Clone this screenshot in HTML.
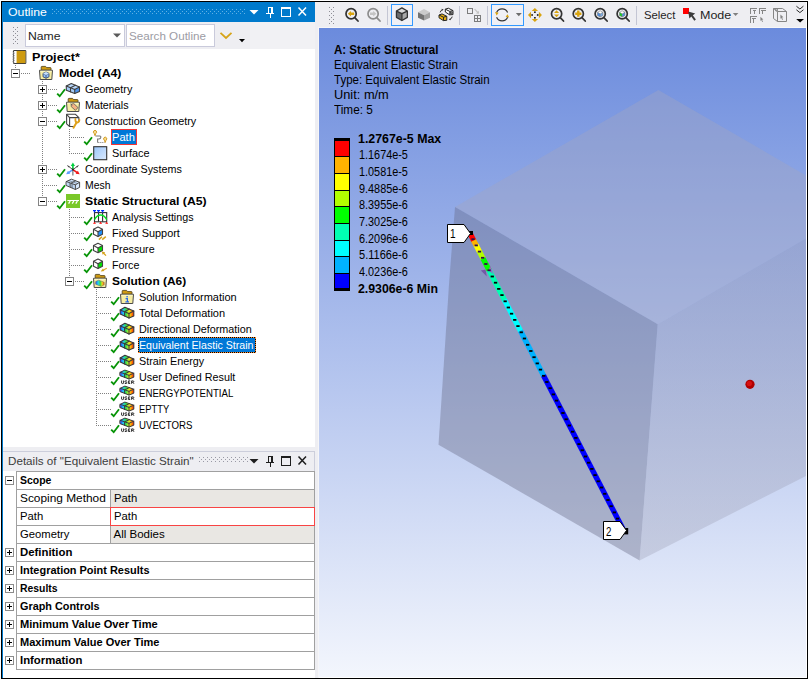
<!DOCTYPE html><html><head><meta charset="utf-8"><title>Mechanical</title><style>
html,body{margin:0;padding:0;width:809px;height:680px;overflow:hidden;background:#fff;}
body{position:relative;font-family:"Liberation Sans",sans-serif;}
.a{position:absolute;}
.t{position:absolute;white-space:pre;line-height:1;transform-origin:0 0;}
svg{overflow:visible;}
</style></head><body>
<div class="a" style="left:1px;top:1px;width:805px;height:676px;border:1px solid #000;"></div>
<div class="a" style="left:3px;top:22px;width:312px;height:656px;background:#fff;"></div>
<div class="a" style="left:315px;top:2px;width:4px;height:676px;background:#EEEEF2;"></div>
<div class="a" style="left:2px;top:2px;width:313px;height:20px;background:#007ACC;"></div>
<div class="a" style="left:2px;top:2px;width:1px;height:676px;background:#007ACC;"></div>
<svg class="a" style="left:52px;top:9px;" width="193" height="5" viewBox="0 0 193 5"><g fill="#5FB0E4" shape-rendering="crispEdges"><rect x="0" y="0" width="1" height="1"/><rect x="0" y="4" width="1" height="1"/><rect x="2" y="2" width="1" height="1"/><rect x="4" y="0" width="1" height="1"/><rect x="4" y="4" width="1" height="1"/><rect x="6" y="2" width="1" height="1"/><rect x="8" y="0" width="1" height="1"/><rect x="8" y="4" width="1" height="1"/><rect x="10" y="2" width="1" height="1"/><rect x="12" y="0" width="1" height="1"/><rect x="12" y="4" width="1" height="1"/><rect x="14" y="2" width="1" height="1"/><rect x="16" y="0" width="1" height="1"/><rect x="16" y="4" width="1" height="1"/><rect x="18" y="2" width="1" height="1"/><rect x="20" y="0" width="1" height="1"/><rect x="20" y="4" width="1" height="1"/><rect x="22" y="2" width="1" height="1"/><rect x="24" y="0" width="1" height="1"/><rect x="24" y="4" width="1" height="1"/><rect x="26" y="2" width="1" height="1"/><rect x="28" y="0" width="1" height="1"/><rect x="28" y="4" width="1" height="1"/><rect x="30" y="2" width="1" height="1"/><rect x="32" y="0" width="1" height="1"/><rect x="32" y="4" width="1" height="1"/><rect x="34" y="2" width="1" height="1"/><rect x="36" y="0" width="1" height="1"/><rect x="36" y="4" width="1" height="1"/><rect x="38" y="2" width="1" height="1"/><rect x="40" y="0" width="1" height="1"/><rect x="40" y="4" width="1" height="1"/><rect x="42" y="2" width="1" height="1"/><rect x="44" y="0" width="1" height="1"/><rect x="44" y="4" width="1" height="1"/><rect x="46" y="2" width="1" height="1"/><rect x="48" y="0" width="1" height="1"/><rect x="48" y="4" width="1" height="1"/><rect x="50" y="2" width="1" height="1"/><rect x="52" y="0" width="1" height="1"/><rect x="52" y="4" width="1" height="1"/><rect x="54" y="2" width="1" height="1"/><rect x="56" y="0" width="1" height="1"/><rect x="56" y="4" width="1" height="1"/><rect x="58" y="2" width="1" height="1"/><rect x="60" y="0" width="1" height="1"/><rect x="60" y="4" width="1" height="1"/><rect x="62" y="2" width="1" height="1"/><rect x="64" y="0" width="1" height="1"/><rect x="64" y="4" width="1" height="1"/><rect x="66" y="2" width="1" height="1"/><rect x="68" y="0" width="1" height="1"/><rect x="68" y="4" width="1" height="1"/><rect x="70" y="2" width="1" height="1"/><rect x="72" y="0" width="1" height="1"/><rect x="72" y="4" width="1" height="1"/><rect x="74" y="2" width="1" height="1"/><rect x="76" y="0" width="1" height="1"/><rect x="76" y="4" width="1" height="1"/><rect x="78" y="2" width="1" height="1"/><rect x="80" y="0" width="1" height="1"/><rect x="80" y="4" width="1" height="1"/><rect x="82" y="2" width="1" height="1"/><rect x="84" y="0" width="1" height="1"/><rect x="84" y="4" width="1" height="1"/><rect x="86" y="2" width="1" height="1"/><rect x="88" y="0" width="1" height="1"/><rect x="88" y="4" width="1" height="1"/><rect x="90" y="2" width="1" height="1"/><rect x="92" y="0" width="1" height="1"/><rect x="92" y="4" width="1" height="1"/><rect x="94" y="2" width="1" height="1"/><rect x="96" y="0" width="1" height="1"/><rect x="96" y="4" width="1" height="1"/><rect x="98" y="2" width="1" height="1"/><rect x="100" y="0" width="1" height="1"/><rect x="100" y="4" width="1" height="1"/><rect x="102" y="2" width="1" height="1"/><rect x="104" y="0" width="1" height="1"/><rect x="104" y="4" width="1" height="1"/><rect x="106" y="2" width="1" height="1"/><rect x="108" y="0" width="1" height="1"/><rect x="108" y="4" width="1" height="1"/><rect x="110" y="2" width="1" height="1"/><rect x="112" y="0" width="1" height="1"/><rect x="112" y="4" width="1" height="1"/><rect x="114" y="2" width="1" height="1"/><rect x="116" y="0" width="1" height="1"/><rect x="116" y="4" width="1" height="1"/><rect x="118" y="2" width="1" height="1"/><rect x="120" y="0" width="1" height="1"/><rect x="120" y="4" width="1" height="1"/><rect x="122" y="2" width="1" height="1"/><rect x="124" y="0" width="1" height="1"/><rect x="124" y="4" width="1" height="1"/><rect x="126" y="2" width="1" height="1"/><rect x="128" y="0" width="1" height="1"/><rect x="128" y="4" width="1" height="1"/><rect x="130" y="2" width="1" height="1"/><rect x="132" y="0" width="1" height="1"/><rect x="132" y="4" width="1" height="1"/><rect x="134" y="2" width="1" height="1"/><rect x="136" y="0" width="1" height="1"/><rect x="136" y="4" width="1" height="1"/><rect x="138" y="2" width="1" height="1"/><rect x="140" y="0" width="1" height="1"/><rect x="140" y="4" width="1" height="1"/><rect x="142" y="2" width="1" height="1"/><rect x="144" y="0" width="1" height="1"/><rect x="144" y="4" width="1" height="1"/><rect x="146" y="2" width="1" height="1"/><rect x="148" y="0" width="1" height="1"/><rect x="148" y="4" width="1" height="1"/><rect x="150" y="2" width="1" height="1"/><rect x="152" y="0" width="1" height="1"/><rect x="152" y="4" width="1" height="1"/><rect x="154" y="2" width="1" height="1"/><rect x="156" y="0" width="1" height="1"/><rect x="156" y="4" width="1" height="1"/><rect x="158" y="2" width="1" height="1"/><rect x="160" y="0" width="1" height="1"/><rect x="160" y="4" width="1" height="1"/><rect x="162" y="2" width="1" height="1"/><rect x="164" y="0" width="1" height="1"/><rect x="164" y="4" width="1" height="1"/><rect x="166" y="2" width="1" height="1"/><rect x="168" y="0" width="1" height="1"/><rect x="168" y="4" width="1" height="1"/><rect x="170" y="2" width="1" height="1"/><rect x="172" y="0" width="1" height="1"/><rect x="172" y="4" width="1" height="1"/><rect x="174" y="2" width="1" height="1"/><rect x="176" y="0" width="1" height="1"/><rect x="176" y="4" width="1" height="1"/><rect x="178" y="2" width="1" height="1"/><rect x="180" y="0" width="1" height="1"/><rect x="180" y="4" width="1" height="1"/><rect x="182" y="2" width="1" height="1"/><rect x="184" y="0" width="1" height="1"/><rect x="184" y="4" width="1" height="1"/><rect x="186" y="2" width="1" height="1"/><rect x="188" y="0" width="1" height="1"/><rect x="188" y="4" width="1" height="1"/><rect x="190" y="2" width="1" height="1"/><rect x="192" y="0" width="1" height="1"/><rect x="192" y="4" width="1" height="1"/></g></svg>
<svg class="a" style="left:0px;top:0px;" width="320" height="24" viewBox="0 0 320 24"><path d="M249.5,10 L258.5,10 L254,14.5 Z" fill="#fff"/><g fill="#fff" shape-rendering="crispEdges"><rect x="268" y="7" width="5" height="1"/><rect x="268" y="7" width="1" height="6"/><rect x="271" y="7" width="2" height="6"/><rect x="266" y="13" width="8" height="1"/><rect x="270" y="14" width="1" height="4"/></g><rect x="281.5" y="8" width="9" height="8" fill="none" stroke="#fff" stroke-width="1" shape-rendering="crispEdges"/><rect x="281" y="7" width="10" height="2" fill="#fff" shape-rendering="crispEdges"/><path d="M298.5,7.5 L306,15.5 M306,7.5 L298.5,15.5" stroke="#fff" stroke-width="1.5" fill="none"/></svg>
<div class="a" style="left:3px;top:22px;width:312px;height:27px;background:#EEEEF2;"></div>
<div class="a" style="left:250px;top:22px;width:65px;height:27px;background:#F1F1F4;"></div>
<svg class="a" style="left:13px;top:27px;" width="5" height="18" viewBox="0 0 5 18"><g fill="#8E8E96" shape-rendering="crispEdges"><rect x="0" y="0" width="1" height="1"/><rect x="4" y="0" width="1" height="1"/><rect x="2" y="2" width="1" height="1"/><rect x="0" y="4" width="1" height="1"/><rect x="4" y="4" width="1" height="1"/><rect x="2" y="6" width="1" height="1"/><rect x="0" y="8" width="1" height="1"/><rect x="4" y="8" width="1" height="1"/><rect x="2" y="10" width="1" height="1"/><rect x="0" y="12" width="1" height="1"/><rect x="4" y="12" width="1" height="1"/><rect x="2" y="14" width="1" height="1"/><rect x="0" y="16" width="1" height="1"/><rect x="4" y="16" width="1" height="1"/></g></svg>
<div class="a" style="left:25px;top:24px;width:100px;height:23px;background:#fff;box-sizing:border-box;border:1px solid #C9CADB;"></div>
<svg class="a" style="left:113px;top:33px;" width="8" height="5" viewBox="0 0 8 5"><path d="M0,0.5 L8,0.5 L4,4.5 Z" fill="#5A5A5A"/></svg>
<div class="a" style="left:126px;top:24px;width:89px;height:23px;background:#fff;box-sizing:border-box;border:1px solid #C9CADB;"></div>
<svg class="a" style="left:220px;top:32px;" width="12" height="7" viewBox="0 0 12 7"><path d="M0.5,0.8 L6,6 L11.5,0.8" fill="none" stroke="#D6A419" stroke-width="1.8"/></svg>
<svg class="a" style="left:239px;top:38.5px;" width="6" height="3.5" viewBox="0 0 6 3.5"><path d="M0,0 L6,0 L3,3.2 Z" fill="#000"/></svg>
<svg class="a" style="left:0px;top:0px;" width="320" height="450" viewBox="0 0 320 450"><g stroke="#808080" stroke-width="1" stroke-dasharray="1,1" shape-rendering="crispEdges"><line x1="15.5" y1="65" x2="15.5" y2="69"/><line x1="42.5" y1="81" x2="42.5" y2="197"/><line x1="69.5" y1="129" x2="69.5" y2="154"/><line x1="69.5" y1="209" x2="69.5" y2="277"/><line x1="96.5" y1="289" x2="96.5" y2="426"/><line x1="21" y1="73.5" x2="30" y2="73.5"/><line x1="48" y1="89.5" x2="57" y2="89.5"/><line x1="48" y1="105.5" x2="57" y2="105.5"/><line x1="48" y1="121.5" x2="57" y2="121.5"/><line x1="71" y1="137.5" x2="84" y2="137.5"/><line x1="71" y1="153.5" x2="84" y2="153.5"/><line x1="48" y1="169.5" x2="57" y2="169.5"/><line x1="44" y1="185.5" x2="57" y2="185.5"/><line x1="48" y1="201.5" x2="57" y2="201.5"/><line x1="71" y1="217.5" x2="84" y2="217.5"/><line x1="71" y1="233.5" x2="84" y2="233.5"/><line x1="71" y1="249.5" x2="84" y2="249.5"/><line x1="71" y1="265.5" x2="84" y2="265.5"/><line x1="75" y1="281.5" x2="84" y2="281.5"/><line x1="98" y1="297.5" x2="111" y2="297.5"/><line x1="98" y1="313.5" x2="111" y2="313.5"/><line x1="98" y1="329.5" x2="111" y2="329.5"/><line x1="98" y1="345.5" x2="111" y2="345.5"/><line x1="98" y1="361.5" x2="111" y2="361.5"/><line x1="98" y1="377.5" x2="111" y2="377.5"/><line x1="98" y1="393.5" x2="111" y2="393.5"/><line x1="98" y1="409.5" x2="111" y2="409.5"/><line x1="98" y1="425.5" x2="111" y2="425.5"/></g></svg>
<svg class="a" style="left:12px;top:49px;" width="16" height="16" viewBox="0 0 16 16"><rect x="1.5" y="1.5" width="12.3" height="13" rx="0.8" fill="#fff" stroke="#3A3A3A" stroke-width="1.1"/><rect x="4.6" y="1.9" width="8.8" height="12.2" fill="#CE9B10"/><path d="M0.6,3 l2,1.2 l-2,1.2 l2,1.2 l-2,1.2 l2,1.2 l-2,1.2 l2,1.2 l-2,1.2 l2,1.2" fill="none" stroke="#9A9A9A" stroke-width="0.7"/></svg>
<svg class="a" style="left:11px;top:69px;shape-rendering:crispEdges;" width="9" height="9" viewBox="0 0 9 9"><rect x="0.5" y="0.5" width="8" height="8" fill="#fff" stroke="#848484"/><rect x="2" y="4" width="5" height="1" fill="#000"/></svg>
<svg class="a" style="left:38px;top:65px;" width="16" height="16" viewBox="0 0 16 16"><path d="M3.2,5.2 V2 Q3.2,1.4 3.8,1.4 H7.6 L8.6,2.6 H12.4 Q13,2.6 13,3.2 V5.2 Z" fill="#CE9A12" stroke="#5A4A20" stroke-width="0.9"/><path d="M1.5,5.3 H14.5 L13.8,14.5 H2.2 Z" fill="#F6EDA2" stroke="#4A4A4A" stroke-width="1" stroke-linejoin="round"/><path d="M2.4,6.2 H13.6" stroke="#FFFBD8" stroke-width="0.8"/><path d="M8,7 L11,8.4 V11.8 L8,13.3 L5,11.8 V8.4 Z" fill="#8FC0F8" stroke="#3A4A6A" stroke-width="0.9" stroke-linejoin="round"/><path d="M5,8.4 L8,9.9 L11,8.4 M8,9.9 V13.3" fill="none" stroke="#3A4A6A" stroke-width="0.8"/><path d="M8,7 L11,8.4 L8,9.9 L5,8.4 Z" fill="#C8E0FC"/></svg>
<svg class="a" style="left:38px;top:85px;shape-rendering:crispEdges;" width="9" height="9" viewBox="0 0 9 9"><rect x="0.5" y="0.5" width="8" height="8" fill="#fff" stroke="#848484"/><rect x="2" y="4" width="5" height="1" fill="#000"/><rect x="4" y="2" width="1" height="5" fill="#000"/></svg>
<svg class="a" style="left:56px;top:81px;" width="10" height="16" viewBox="0 0 10 16"><path d="M1.2,12.6 L3.7,15.2 L9,8.2" fill="none" stroke="#079407" stroke-width="1.85"/></svg>
<svg class="a" style="left:65px;top:81px;" width="16" height="16" viewBox="0 0 16 16"><polygon points="1.30,4.90 6.30,2.50 14.50,6.10 9.70,8.40" fill="#B9D7FA"/><polygon points="1.30,4.90 9.70,8.40 9.70,12.50 1.30,9.20" fill="#A3CBF8"/><polygon points="9.70,8.40 14.50,6.10 14.50,10.40 9.70,12.50" fill="#4C93EE"/><g fill="none" stroke="#3E3E3E" stroke-width="1.1" stroke-linejoin="round" stroke-linecap="round"><polygon points="1.30,4.90 6.30,2.50 14.50,6.10 14.50,10.40 9.70,12.50 1.30,9.20"/><polyline points="1.30,4.90 9.70,8.40 14.50,6.10"/><polyline points="9.70,8.40 9.70,12.50"/><polyline points="10.40,4.30 5.50,6.65 5.50,10.85"/></g></svg>
<svg class="a" style="left:38px;top:101px;shape-rendering:crispEdges;" width="9" height="9" viewBox="0 0 9 9"><rect x="0.5" y="0.5" width="8" height="8" fill="#fff" stroke="#848484"/><rect x="2" y="4" width="5" height="1" fill="#000"/><rect x="4" y="2" width="1" height="5" fill="#000"/></svg>
<svg class="a" style="left:56px;top:97px;" width="10" height="16" viewBox="0 0 10 16"><path d="M1.2,12.6 L3.7,15.2 L9,8.2" fill="none" stroke="#079407" stroke-width="1.85"/></svg>
<svg class="a" style="left:65px;top:97px;" width="16" height="16" viewBox="0 0 16 16"><path d="M3.2,5.2 V2 Q3.2,1.4 3.8,1.4 H7.6 L8.6,2.6 H12.4 Q13,2.6 13,3.2 V5.2 Z" fill="#CE9A12" stroke="#5A4A20" stroke-width="0.9"/><path d="M1.5,5.3 H14.5 L13.8,14.5 H2.2 Z" fill="#F6EDA2" stroke="#4A4A4A" stroke-width="1" stroke-linejoin="round"/><path d="M2.4,6.2 H13.6" stroke="#FFFBD8" stroke-width="0.8"/><path d="M6.2,7.2 L8.8,6.6 L13,10.6 L10.4,13.4 L6.2,9.6 Z" fill="#F4B183" stroke="#5A5A5A" stroke-width="0.8" stroke-linejoin="round"/><path d="M5.6,6.6 L7.2,8.4" stroke="#5A5A5A" stroke-width="0.8"/></svg>
<svg class="a" style="left:38px;top:117px;shape-rendering:crispEdges;" width="9" height="9" viewBox="0 0 9 9"><rect x="0.5" y="0.5" width="8" height="8" fill="#fff" stroke="#848484"/><rect x="2" y="4" width="5" height="1" fill="#000"/></svg>
<svg class="a" style="left:56px;top:113px;" width="10" height="16" viewBox="0 0 10 16"><path d="M1.2,12.6 L3.7,15.2 L9,8.2" fill="none" stroke="#079407" stroke-width="1.85"/></svg>
<svg class="a" style="left:65px;top:113px;" width="16" height="16" viewBox="0 0 16 16"><g fill="#fff" stroke="#444" stroke-width="1.1" stroke-linejoin="round"><polygon points="1.6,1.3 10.5,1.3 13.9,4.6 13.9,13.5 4.6,13.5 1.6,10.9"/><polyline points="1.6,1.3 4.6,4.6 13.9,4.6" fill="none"/><polyline points="4.6,4.6 4.6,13.5" fill="none"/></g><rect x="9" y="9" width="7" height="6" fill="#fff"/><path d="M8.5,14.7 L11.6,9.4" stroke="#E0A21C" stroke-width="2" fill="none" stroke-linecap="round"/><path d="M10.4,6 Q10.2,9.4 12,9.6 Q13.8,9.6 14.4,7" stroke="#E0A21C" stroke-width="1.8" fill="none" stroke-linecap="round"/></svg>
<svg class="a" style="left:83px;top:129px;" width="10" height="16" viewBox="0 0 10 16"><path d="M1.2,12.6 L3.7,15.2 L9,8.2" fill="none" stroke="#079407" stroke-width="1.85"/></svg>
<svg class="a" style="left:92px;top:129px;" width="16" height="16" viewBox="0 0 16 16"><path d="M3.4,7 H7.8 Q9,7 8.8,8.4 Q8.6,10 7,10 H5.6 V13.5" fill="none" stroke="#7A7A7A" stroke-width="1.1"/><path d="M5.6,13.5 H12.4" fill="none" stroke="#8A8A8A" stroke-width="1.1" stroke-dasharray="1.2,0.8"/><path d="M3,6.7 L2.1,4.3 A1.6,1.6 0 1 1 3.9,4.3 Z" fill="#F8DC90" stroke="#CE961A" stroke-width="0.9"/><path d="M13.2,13.5 L12.3,11.1 A1.6,1.6 0 1 1 14.1,11.1 Z" fill="#F8DC90" stroke="#CE961A" stroke-width="0.9"/></svg>
<div class="a" style="left:111px;top:129px;width:26px;height:16px;background:#0078D7;box-sizing:border-box;border:1px solid #F53434;"></div>
<svg class="a" style="left:83px;top:145px;" width="10" height="16" viewBox="0 0 10 16"><path d="M1.2,12.6 L3.7,15.2 L9,8.2" fill="none" stroke="#079407" stroke-width="1.85"/></svg>
<svg class="a" style="left:92px;top:145px;" width="16" height="16" viewBox="0 0 16 16"><defs><linearGradient id="sfg" x1="0" y1="0" x2="1" y2="1"><stop offset="0" stop-color="#9AC6FA"/><stop offset="1" stop-color="#DCEAFD"/></linearGradient></defs><rect x="1.7" y="1.7" width="13" height="13" fill="url(#sfg)" stroke="#333" stroke-width="1.1"/></svg>
<svg class="a" style="left:38px;top:165px;shape-rendering:crispEdges;" width="9" height="9" viewBox="0 0 9 9"><rect x="0.5" y="0.5" width="8" height="8" fill="#fff" stroke="#848484"/><rect x="2" y="4" width="5" height="1" fill="#000"/><rect x="4" y="2" width="1" height="5" fill="#000"/></svg>
<svg class="a" style="left:56px;top:161px;" width="10" height="16" viewBox="0 0 10 16"><path d="M1.2,12.6 L3.7,15.2 L9,8.2" fill="none" stroke="#079407" stroke-width="1.85"/></svg>
<svg class="a" style="left:65px;top:161px;" width="16" height="16" viewBox="0 0 16 16"><g stroke="#444" stroke-width="0.9" fill="none"><path d="M2.4,4.6 L7.9,8.6 M13.5,4.6 L7.9,8.6 M7.9,14.5 V8.6"/></g><path d="M2.4,4.6 l2.4,0.6 l-1.2,1.4 Z M13.5,4.6 l-2.4,0.6 l1.2,1.4 Z" fill="#444"/><path d="M7.9,8.6 V4" stroke="#00C838" stroke-width="1.6"/><path d="M7.9,1.4 L10,5 H5.8 Z" fill="#00D040"/><path d="M7.9,8.6 L3.6,11.6" stroke="#5A9CFF" stroke-width="1.6"/><path d="M1.1,13.3 L3,9.8 L5.2,12.8 Z" fill="#5A9CFF"/><path d="M7.9,8.6 L12.2,11.6" stroke="#F01818" stroke-width="1.6"/><path d="M14.7,13.3 L12.8,9.8 L10.6,12.8 Z" fill="#F01818"/><rect x="7" y="7.7" width="1.8" height="1.8" fill="#222"/></svg>
<svg class="a" style="left:56px;top:177px;" width="10" height="16" viewBox="0 0 10 16"><path d="M1.2,12.6 L3.7,15.2 L9,8.2" fill="none" stroke="#079407" stroke-width="1.85"/></svg>
<svg class="a" style="left:65px;top:177px;" width="16" height="16" viewBox="0 0 16 16"><polygon points="1.40,4.50 6.40,2.20 14.60,5.30 10.40,7.90" fill="#CFE2FA"/><polygon points="1.40,4.50 10.40,7.90 10.40,12.50 1.40,8.60" fill="#C2DAF8"/><polygon points="10.40,7.90 14.60,5.30 14.60,10.40 10.40,12.50" fill="#D8E8FC"/><path d="M3.6,3.5 L12.5,6.6 M4.4,5.6 V9.8 M7.6,6.8 V11.2" stroke="#6A7A8A" stroke-width="0.7" fill="none"/><g fill="none" stroke="#4A4A4A" stroke-width="1" stroke-linejoin="round" stroke-linecap="round"><polygon points="1.40,4.50 6.40,2.20 14.60,5.30 14.60,10.40 10.40,12.50 1.40,8.60"/><polyline points="1.40,4.50 10.40,7.90 14.60,5.30"/><polyline points="10.40,7.90 10.40,12.50"/><polyline points="10.50,3.75 5.90,6.20 5.90,10.55"/></g></svg>
<svg class="a" style="left:38px;top:197px;shape-rendering:crispEdges;" width="9" height="9" viewBox="0 0 9 9"><rect x="0.5" y="0.5" width="8" height="8" fill="#fff" stroke="#848484"/><rect x="2" y="4" width="5" height="1" fill="#000"/></svg>
<svg class="a" style="left:56px;top:193px;" width="10" height="16" viewBox="0 0 10 16"><path d="M1.2,12.6 L3.7,15.2 L9,8.2" fill="none" stroke="#079407" stroke-width="1.85"/></svg>
<svg class="a" style="left:65px;top:193px;" width="16" height="16" viewBox="0 0 16 16"><rect x="1" y="1" width="14" height="14" fill="#7AC829"/><rect x="2.4" y="7" width="11.6" height="1" fill="#fff"/><path d="M5.2,8 L3.6,10.6 M8.8,8 L7.2,10.6 M12.4,8 L10.8,10.6" stroke="#fff" stroke-width="1.3" fill="none"/></svg>
<svg class="a" style="left:83px;top:209px;" width="10" height="16" viewBox="0 0 10 16"><path d="M1.2,12.6 L3.7,15.2 L9,8.2" fill="none" stroke="#079407" stroke-width="1.85"/></svg>
<svg class="a" style="left:92px;top:209px;" width="16" height="16" viewBox="0 0 16 16"><g fill="none" stroke="#333" stroke-width="1.1"><rect x="2.5" y="3.6" width="12.2" height="9.2" fill="#fff"/><path d="M6.5,3.6 V12.8 M10.6,3.6 V12.8"/></g><path d="M2.5,10.6 Q5,6 8.6,6 Q12.2,6 14.7,10.6" fill="none" stroke="#00E020" stroke-width="1.3"/><g stroke="#0030FF" stroke-width="1.1" fill="none"><path d="M1,1.6 H4 M5,1.6 H8 M9.1,1.6 H12.1 M2.5,1.6 V3.6 M6.5,1.6 V3.6 M10.6,1.6 V3.6"/></g><g fill="#FF0000"><path d="M2.5,12.8 L4,14.8 H1 Z M8.6,12.8 L10.1,14.8 H7.1 Z M14.7,12.8 L16.2,14.8 H13.2 Z"/></g></svg>
<svg class="a" style="left:83px;top:225px;" width="10" height="16" viewBox="0 0 10 16"><path d="M1.2,12.6 L3.7,15.2 L9,8.2" fill="none" stroke="#079407" stroke-width="1.85"/></svg>
<svg class="a" style="left:92px;top:225px;" width="16" height="16" viewBox="0 0 16 16"><polygon points="6.00,2.00 10.50,4.30 10.50,9.20 6.00,11.60 1.50,9.20 1.50,4.30" fill="#fff"/><polygon points="6.00,6.80 10.50,4.30 10.50,9.20 6.00,11.60" fill="#1E90FF"/><g fill="none" stroke="#444" stroke-width="1.1" stroke-linejoin="round"><polygon points="6.00,2.00 10.50,4.30 10.50,9.20 6.00,11.60 1.50,9.20 1.50,4.30"/><polyline points="1.50,4.30 6.00,6.80 10.50,4.30"/><polyline points="6.00,6.80 6.00,11.60"/></g><path d="M6.9,14.6 L9.9,11.7 M10.2,14.6 L13.8,11.7" stroke="#D4A21C" stroke-width="1.5" fill="none"/></svg>
<svg class="a" style="left:83px;top:241px;" width="10" height="16" viewBox="0 0 10 16"><path d="M1.2,12.6 L3.7,15.2 L9,8.2" fill="none" stroke="#079407" stroke-width="1.85"/></svg>
<svg class="a" style="left:92px;top:241px;" width="16" height="16" viewBox="0 0 16 16"><polygon points="6.00,2.20 10.50,4.50 10.50,9.40 6.00,11.80 1.50,9.40 1.50,4.50" fill="#fff"/><polygon points="6.00,7.00 10.50,4.50 10.50,9.40 6.00,11.80" fill="#00E400"/><g fill="none" stroke="#444" stroke-width="1.1" stroke-linejoin="round"><polygon points="6.00,2.20 10.50,4.50 10.50,9.40 6.00,11.80 1.50,9.40 1.50,4.50"/><polyline points="1.50,4.50 6.00,7.00 10.50,4.50"/><polyline points="6.00,7.00 6.00,11.80"/></g><path d="M14,14.6 L11.4,12" stroke="#D4A21C" stroke-width="1.3" fill="none"/><path d="M9.8,10.6 L13.2,11.2 L10.6,13.8 Z" fill="#D4A21C"/></svg>
<svg class="a" style="left:83px;top:257px;" width="10" height="16" viewBox="0 0 10 16"><path d="M1.2,12.6 L3.7,15.2 L9,8.2" fill="none" stroke="#079407" stroke-width="1.85"/></svg>
<svg class="a" style="left:92px;top:257px;" width="16" height="16" viewBox="0 0 16 16"><polygon points="6.00,2.00 10.50,4.30 10.50,9.20 6.00,11.60 1.50,9.20 1.50,4.30" fill="#fff"/><polygon points="6.00,6.80 10.50,4.30 10.50,9.20 6.00,11.60" fill="#00E400"/><g fill="none" stroke="#444" stroke-width="1.1" stroke-linejoin="round"><polygon points="6.00,2.00 10.50,4.30 10.50,9.20 6.00,11.60 1.50,9.20 1.50,4.30"/><polyline points="1.50,4.30 6.00,6.80 10.50,4.30"/><polyline points="6.00,6.80 6.00,11.60"/></g><path d="M14.8,11.2 L11.4,13" stroke="#E0AE30" stroke-width="1.2" fill="none"/><path d="M8.6,14.4 L11,11.4 L12.4,14 Z" fill="#D4A21C"/></svg>
<svg class="a" style="left:65px;top:277px;shape-rendering:crispEdges;" width="9" height="9" viewBox="0 0 9 9"><rect x="0.5" y="0.5" width="8" height="8" fill="#fff" stroke="#848484"/><rect x="2" y="4" width="5" height="1" fill="#000"/></svg>
<svg class="a" style="left:83px;top:273px;" width="10" height="16" viewBox="0 0 10 16"><path d="M1.2,12.6 L3.7,15.2 L9,8.2" fill="none" stroke="#079407" stroke-width="1.85"/></svg>
<svg class="a" style="left:92px;top:273px;" width="16" height="16" viewBox="0 0 16 16"><path d="M3.2,5.2 V2 Q3.2,1.4 3.8,1.4 H7.6 L8.6,2.6 H12.4 Q13,2.6 13,3.2 V5.2 Z" fill="#CE9A12" stroke="#5A4A20" stroke-width="0.9"/><path d="M1.5,5.3 H14.5 L13.8,14.5 H2.2 Z" fill="#F6EDA2" stroke="#4A4A4A" stroke-width="1" stroke-linejoin="round"/><path d="M2.4,6.2 H13.6" stroke="#FFFBD8" stroke-width="0.8"/><defs><linearGradient id="rg0" gradientUnits="userSpaceOnUse" x1="3.6" x2="12.2" y1="0" y2="0"><stop offset="0" stop-color="#3050F0"/><stop offset=".3" stop-color="#20D8F0"/><stop offset=".55" stop-color="#40D840"/><stop offset=".75" stop-color="#E8E020"/><stop offset="1" stop-color="#F05010"/></linearGradient></defs><path d="M3.6,8.6 L6.6,7.2 L12.2,9.2 V11.8 L9.2,13.4 L3.6,11.2 Z" fill="url(#rg0)" stroke="#6A6A5A" stroke-width="0.5"/></svg>
<svg class="a" style="left:110px;top:289px;" width="10" height="16" viewBox="0 0 10 16"><path d="M1.2,12.6 L3.7,15.2 L9,8.2" fill="none" stroke="#079407" stroke-width="1.85"/></svg>
<svg class="a" style="left:119px;top:289px;" width="16" height="16" viewBox="0 0 16 16"><path d="M3.2,5.2 V2 Q3.2,1.4 3.8,1.4 H7.6 L8.6,2.6 H12.4 Q13,2.6 13,3.2 V5.2 Z" fill="#CE9A12" stroke="#5A4A20" stroke-width="0.9"/><path d="M1.5,5.3 H14.5 L13.8,14.5 H2.2 Z" fill="#F6EDA2" stroke="#4A4A4A" stroke-width="1" stroke-linejoin="round"/><path d="M2.4,6.2 H13.6" stroke="#FFFBD8" stroke-width="0.8"/><rect x="7.4" y="7" width="1.4" height="1.4" fill="#2A6AE8"/><path d="M6.6,9.6 H8.4 V12.6 M6.4,12.8 H10" fill="none" stroke="#2A6AE8" stroke-width="1.2"/></svg>
<svg class="a" style="left:110px;top:305px;" width="10" height="16" viewBox="0 0 10 16"><path d="M1.2,12.6 L3.7,15.2 L9,8.2" fill="none" stroke="#079407" stroke-width="1.85"/></svg>
<svg class="a" style="left:119px;top:305px;" width="16" height="16" viewBox="0 0 16 16"><defs><linearGradient id="rgA" gradientUnits="userSpaceOnUse" x1="1.5" x2="14.5" y1="0" y2="0"><stop offset="0" stop-color="#2838F8"/><stop offset=".2" stop-color="#20C8F8"/><stop offset=".42" stop-color="#30E048"/><stop offset=".66" stop-color="#F0F020"/><stop offset=".85" stop-color="#FF9000"/><stop offset="1" stop-color="#F02810"/></linearGradient></defs><polygon points="1.20,4.90 5.90,2.20 14.80,6.00 10.00,8.60" fill="url(#rgA)"/><polygon points="1.20,4.90 10.00,8.60 10.00,13.10 1.20,9.00" fill="url(#rgA)"/><polygon points="10.00,8.60 14.80,6.00 14.80,10.90 10.00,13.10" fill="url(#rgA)"/><g fill="none" stroke="#3A3A3A" stroke-width="1.1" stroke-linejoin="round" stroke-linecap="round"><polygon points="1.20,4.90 5.90,2.20 14.80,6.00 14.80,10.90 10.00,13.10 1.20,9.00"/><polyline points="1.20,4.90 10.00,8.60 14.80,6.00"/><polyline points="10.00,8.60 10.00,13.10"/><polyline points="10.35,4.10 5.60,6.75 5.60,11.05"/></g></svg>
<svg class="a" style="left:110px;top:321px;" width="10" height="16" viewBox="0 0 10 16"><path d="M1.2,12.6 L3.7,15.2 L9,8.2" fill="none" stroke="#079407" stroke-width="1.85"/></svg>
<svg class="a" style="left:119px;top:321px;" width="16" height="16" viewBox="0 0 16 16"><defs><linearGradient id="rgA" gradientUnits="userSpaceOnUse" x1="1.5" x2="14.5" y1="0" y2="0"><stop offset="0" stop-color="#2838F8"/><stop offset=".2" stop-color="#20C8F8"/><stop offset=".42" stop-color="#30E048"/><stop offset=".66" stop-color="#F0F020"/><stop offset=".85" stop-color="#FF9000"/><stop offset="1" stop-color="#F02810"/></linearGradient></defs><polygon points="1.20,4.90 5.90,2.20 14.80,6.00 10.00,8.60" fill="url(#rgA)"/><polygon points="1.20,4.90 10.00,8.60 10.00,13.10 1.20,9.00" fill="url(#rgA)"/><polygon points="10.00,8.60 14.80,6.00 14.80,10.90 10.00,13.10" fill="url(#rgA)"/><g fill="none" stroke="#3A3A3A" stroke-width="1.1" stroke-linejoin="round" stroke-linecap="round"><polygon points="1.20,4.90 5.90,2.20 14.80,6.00 14.80,10.90 10.00,13.10 1.20,9.00"/><polyline points="1.20,4.90 10.00,8.60 14.80,6.00"/><polyline points="10.00,8.60 10.00,13.10"/><polyline points="10.35,4.10 5.60,6.75 5.60,11.05"/></g></svg>
<svg class="a" style="left:110px;top:337px;" width="10" height="16" viewBox="0 0 10 16"><path d="M1.2,12.6 L3.7,15.2 L9,8.2" fill="none" stroke="#079407" stroke-width="1.85"/></svg>
<svg class="a" style="left:119px;top:337px;" width="16" height="16" viewBox="0 0 16 16"><defs><linearGradient id="rgA" gradientUnits="userSpaceOnUse" x1="1.5" x2="14.5" y1="0" y2="0"><stop offset="0" stop-color="#2838F8"/><stop offset=".2" stop-color="#20C8F8"/><stop offset=".42" stop-color="#30E048"/><stop offset=".66" stop-color="#F0F020"/><stop offset=".85" stop-color="#FF9000"/><stop offset="1" stop-color="#F02810"/></linearGradient></defs><polygon points="1.20,4.90 5.90,2.20 14.80,6.00 10.00,8.60" fill="url(#rgA)"/><polygon points="1.20,4.90 10.00,8.60 10.00,13.10 1.20,9.00" fill="url(#rgA)"/><polygon points="10.00,8.60 14.80,6.00 14.80,10.90 10.00,13.10" fill="url(#rgA)"/><g fill="none" stroke="#3A3A3A" stroke-width="1.1" stroke-linejoin="round" stroke-linecap="round"><polygon points="1.20,4.90 5.90,2.20 14.80,6.00 14.80,10.90 10.00,13.10 1.20,9.00"/><polyline points="1.20,4.90 10.00,8.60 14.80,6.00"/><polyline points="10.00,8.60 10.00,13.10"/><polyline points="10.35,4.10 5.60,6.75 5.60,11.05"/></g></svg>
<div class="a" style="left:138px;top:337px;width:118px;height:16px;background:#0078D7;box-sizing:border-box;border:1px solid #000;"></div>
<div class="a" style="left:138px;top:337px;width:118px;height:16px;box-sizing:border-box;border:1px dotted #FF8A28;"></div>
<svg class="a" style="left:110px;top:353px;" width="10" height="16" viewBox="0 0 10 16"><path d="M1.2,12.6 L3.7,15.2 L9,8.2" fill="none" stroke="#079407" stroke-width="1.85"/></svg>
<svg class="a" style="left:119px;top:353px;" width="16" height="16" viewBox="0 0 16 16"><defs><linearGradient id="rgA" gradientUnits="userSpaceOnUse" x1="1.5" x2="14.5" y1="0" y2="0"><stop offset="0" stop-color="#2838F8"/><stop offset=".2" stop-color="#20C8F8"/><stop offset=".42" stop-color="#30E048"/><stop offset=".66" stop-color="#F0F020"/><stop offset=".85" stop-color="#FF9000"/><stop offset="1" stop-color="#F02810"/></linearGradient></defs><polygon points="1.20,4.90 5.90,2.20 14.80,6.00 10.00,8.60" fill="url(#rgA)"/><polygon points="1.20,4.90 10.00,8.60 10.00,13.10 1.20,9.00" fill="url(#rgA)"/><polygon points="10.00,8.60 14.80,6.00 14.80,10.90 10.00,13.10" fill="url(#rgA)"/><g fill="none" stroke="#3A3A3A" stroke-width="1.1" stroke-linejoin="round" stroke-linecap="round"><polygon points="1.20,4.90 5.90,2.20 14.80,6.00 14.80,10.90 10.00,13.10 1.20,9.00"/><polyline points="1.20,4.90 10.00,8.60 14.80,6.00"/><polyline points="10.00,8.60 10.00,13.10"/><polyline points="10.35,4.10 5.60,6.75 5.60,11.05"/></g></svg>
<svg class="a" style="left:110px;top:369px;" width="10" height="16" viewBox="0 0 10 16"><path d="M1.2,12.6 L3.7,15.2 L9,8.2" fill="none" stroke="#079407" stroke-width="1.85"/></svg>
<svg class="a" style="left:119px;top:369px;" width="16" height="16" viewBox="0 0 16 16"><defs><linearGradient id="rgB" gradientUnits="userSpaceOnUse" x1="1.5" x2="14.5" y1="0" y2="0"><stop offset="0" stop-color="#2838F8"/><stop offset=".2" stop-color="#20C8F8"/><stop offset=".42" stop-color="#30E048"/><stop offset=".66" stop-color="#F0F020"/><stop offset=".85" stop-color="#FF9000"/><stop offset="1" stop-color="#F02810"/></linearGradient></defs><polygon points="1.20,3.30 5.90,1.10 14.80,4.20 10.00,6.30" fill="url(#rgB)"/><polygon points="1.20,3.30 10.00,6.30 10.00,10.00 1.20,6.70" fill="url(#rgB)"/><polygon points="10.00,6.30 14.80,4.20 14.80,8.20 10.00,10.00" fill="url(#rgB)"/><g fill="none" stroke="#3A3A3A" stroke-width="1" stroke-linejoin="round" stroke-linecap="round"><polygon points="1.20,3.30 5.90,1.10 14.80,4.20 14.80,8.20 10.00,10.00 1.20,6.70"/><polyline points="1.20,3.30 10.00,6.30 14.80,4.20"/><polyline points="10.00,6.30 10.00,10.00"/><polyline points="10.35,2.65 5.60,4.80 5.60,8.35"/></g><g fill="none" stroke="#333" stroke-width="1"><path d="M2.6,11.5 V14 Q2.6,14.6 3.6,14.6 Q4.6,14.6 4.6,14 V11.5"/><path d="M8,11.9 H6.4 Q5.9,11.9 5.9,12.6 Q5.9,13.1 6.9,13.2 Q7.9,13.3 7.9,13.9 Q7.9,14.5 7.3,14.5 H5.8"/><path d="M11.2,11.9 H9.4 V14.5 H11.2 M9.4,13.2 H10.8"/><path d="M12.6,14.8 V11.9 H14 Q14.8,11.9 14.8,12.6 Q14.8,13.3 14,13.3 H12.6 M13.8,13.3 L15,14.8"/></g></svg>
<svg class="a" style="left:110px;top:385px;" width="10" height="16" viewBox="0 0 10 16"><path d="M1.2,12.6 L3.7,15.2 L9,8.2" fill="none" stroke="#079407" stroke-width="1.85"/></svg>
<svg class="a" style="left:119px;top:385px;" width="16" height="16" viewBox="0 0 16 16"><defs><linearGradient id="rgB" gradientUnits="userSpaceOnUse" x1="1.5" x2="14.5" y1="0" y2="0"><stop offset="0" stop-color="#2838F8"/><stop offset=".2" stop-color="#20C8F8"/><stop offset=".42" stop-color="#30E048"/><stop offset=".66" stop-color="#F0F020"/><stop offset=".85" stop-color="#FF9000"/><stop offset="1" stop-color="#F02810"/></linearGradient></defs><polygon points="1.20,3.30 5.90,1.10 14.80,4.20 10.00,6.30" fill="url(#rgB)"/><polygon points="1.20,3.30 10.00,6.30 10.00,10.00 1.20,6.70" fill="url(#rgB)"/><polygon points="10.00,6.30 14.80,4.20 14.80,8.20 10.00,10.00" fill="url(#rgB)"/><g fill="none" stroke="#3A3A3A" stroke-width="1" stroke-linejoin="round" stroke-linecap="round"><polygon points="1.20,3.30 5.90,1.10 14.80,4.20 14.80,8.20 10.00,10.00 1.20,6.70"/><polyline points="1.20,3.30 10.00,6.30 14.80,4.20"/><polyline points="10.00,6.30 10.00,10.00"/><polyline points="10.35,2.65 5.60,4.80 5.60,8.35"/></g><g fill="none" stroke="#333" stroke-width="1"><path d="M2.6,11.5 V14 Q2.6,14.6 3.6,14.6 Q4.6,14.6 4.6,14 V11.5"/><path d="M8,11.9 H6.4 Q5.9,11.9 5.9,12.6 Q5.9,13.1 6.9,13.2 Q7.9,13.3 7.9,13.9 Q7.9,14.5 7.3,14.5 H5.8"/><path d="M11.2,11.9 H9.4 V14.5 H11.2 M9.4,13.2 H10.8"/><path d="M12.6,14.8 V11.9 H14 Q14.8,11.9 14.8,12.6 Q14.8,13.3 14,13.3 H12.6 M13.8,13.3 L15,14.8"/></g></svg>
<svg class="a" style="left:110px;top:401px;" width="10" height="16" viewBox="0 0 10 16"><path d="M1.2,12.6 L3.7,15.2 L9,8.2" fill="none" stroke="#079407" stroke-width="1.85"/></svg>
<svg class="a" style="left:119px;top:401px;" width="16" height="16" viewBox="0 0 16 16"><defs><linearGradient id="rgB" gradientUnits="userSpaceOnUse" x1="1.5" x2="14.5" y1="0" y2="0"><stop offset="0" stop-color="#2838F8"/><stop offset=".2" stop-color="#20C8F8"/><stop offset=".42" stop-color="#30E048"/><stop offset=".66" stop-color="#F0F020"/><stop offset=".85" stop-color="#FF9000"/><stop offset="1" stop-color="#F02810"/></linearGradient></defs><polygon points="1.20,3.30 5.90,1.10 14.80,4.20 10.00,6.30" fill="url(#rgB)"/><polygon points="1.20,3.30 10.00,6.30 10.00,10.00 1.20,6.70" fill="url(#rgB)"/><polygon points="10.00,6.30 14.80,4.20 14.80,8.20 10.00,10.00" fill="url(#rgB)"/><g fill="none" stroke="#3A3A3A" stroke-width="1" stroke-linejoin="round" stroke-linecap="round"><polygon points="1.20,3.30 5.90,1.10 14.80,4.20 14.80,8.20 10.00,10.00 1.20,6.70"/><polyline points="1.20,3.30 10.00,6.30 14.80,4.20"/><polyline points="10.00,6.30 10.00,10.00"/><polyline points="10.35,2.65 5.60,4.80 5.60,8.35"/></g><g fill="none" stroke="#333" stroke-width="1"><path d="M2.6,11.5 V14 Q2.6,14.6 3.6,14.6 Q4.6,14.6 4.6,14 V11.5"/><path d="M8,11.9 H6.4 Q5.9,11.9 5.9,12.6 Q5.9,13.1 6.9,13.2 Q7.9,13.3 7.9,13.9 Q7.9,14.5 7.3,14.5 H5.8"/><path d="M11.2,11.9 H9.4 V14.5 H11.2 M9.4,13.2 H10.8"/><path d="M12.6,14.8 V11.9 H14 Q14.8,11.9 14.8,12.6 Q14.8,13.3 14,13.3 H12.6 M13.8,13.3 L15,14.8"/></g></svg>
<svg class="a" style="left:110px;top:417px;" width="10" height="16" viewBox="0 0 10 16"><path d="M1.2,12.6 L3.7,15.2 L9,8.2" fill="none" stroke="#079407" stroke-width="1.85"/></svg>
<svg class="a" style="left:119px;top:417px;" width="16" height="16" viewBox="0 0 16 16"><defs><linearGradient id="rgB" gradientUnits="userSpaceOnUse" x1="1.5" x2="14.5" y1="0" y2="0"><stop offset="0" stop-color="#2838F8"/><stop offset=".2" stop-color="#20C8F8"/><stop offset=".42" stop-color="#30E048"/><stop offset=".66" stop-color="#F0F020"/><stop offset=".85" stop-color="#FF9000"/><stop offset="1" stop-color="#F02810"/></linearGradient></defs><polygon points="1.20,3.30 5.90,1.10 14.80,4.20 10.00,6.30" fill="url(#rgB)"/><polygon points="1.20,3.30 10.00,6.30 10.00,10.00 1.20,6.70" fill="url(#rgB)"/><polygon points="10.00,6.30 14.80,4.20 14.80,8.20 10.00,10.00" fill="url(#rgB)"/><g fill="none" stroke="#3A3A3A" stroke-width="1" stroke-linejoin="round" stroke-linecap="round"><polygon points="1.20,3.30 5.90,1.10 14.80,4.20 14.80,8.20 10.00,10.00 1.20,6.70"/><polyline points="1.20,3.30 10.00,6.30 14.80,4.20"/><polyline points="10.00,6.30 10.00,10.00"/><polyline points="10.35,2.65 5.60,4.80 5.60,8.35"/></g><g fill="none" stroke="#333" stroke-width="1"><path d="M2.6,11.5 V14 Q2.6,14.6 3.6,14.6 Q4.6,14.6 4.6,14 V11.5"/><path d="M8,11.9 H6.4 Q5.9,11.9 5.9,12.6 Q5.9,13.1 6.9,13.2 Q7.9,13.3 7.9,13.9 Q7.9,14.5 7.3,14.5 H5.8"/><path d="M11.2,11.9 H9.4 V14.5 H11.2 M9.4,13.2 H10.8"/><path d="M12.6,14.8 V11.9 H14 Q14.8,11.9 14.8,12.6 Q14.8,13.3 14,13.3 H12.6 M13.8,13.3 L15,14.8"/></g></svg>
<div class="a" style="left:3px;top:447px;width:312px;height:24px;background:#EEEEF2;"></div>
<div class="a" style="left:3px;top:451px;width:312px;height:1px;background:#CCCEDB;"></div>
<div class="a" style="left:314px;top:451px;width:1px;height:20px;background:#CCCEDB;"></div>
<svg class="a" style="left:199px;top:457px;" width="48" height="5" viewBox="0 0 48 5"><g fill="#9A9AA6" shape-rendering="crispEdges"><rect x="0" y="0" width="1" height="1"/><rect x="0" y="4" width="1" height="1"/><rect x="2" y="2" width="1" height="1"/><rect x="4" y="0" width="1" height="1"/><rect x="4" y="4" width="1" height="1"/><rect x="6" y="2" width="1" height="1"/><rect x="8" y="0" width="1" height="1"/><rect x="8" y="4" width="1" height="1"/><rect x="10" y="2" width="1" height="1"/><rect x="12" y="0" width="1" height="1"/><rect x="12" y="4" width="1" height="1"/><rect x="14" y="2" width="1" height="1"/><rect x="16" y="0" width="1" height="1"/><rect x="16" y="4" width="1" height="1"/><rect x="18" y="2" width="1" height="1"/><rect x="20" y="0" width="1" height="1"/><rect x="20" y="4" width="1" height="1"/><rect x="22" y="2" width="1" height="1"/><rect x="24" y="0" width="1" height="1"/><rect x="24" y="4" width="1" height="1"/><rect x="26" y="2" width="1" height="1"/><rect x="28" y="0" width="1" height="1"/><rect x="28" y="4" width="1" height="1"/><rect x="30" y="2" width="1" height="1"/><rect x="32" y="0" width="1" height="1"/><rect x="32" y="4" width="1" height="1"/><rect x="34" y="2" width="1" height="1"/><rect x="36" y="0" width="1" height="1"/><rect x="36" y="4" width="1" height="1"/><rect x="38" y="2" width="1" height="1"/><rect x="40" y="0" width="1" height="1"/><rect x="40" y="4" width="1" height="1"/><rect x="42" y="2" width="1" height="1"/><rect x="44" y="0" width="1" height="1"/><rect x="44" y="4" width="1" height="1"/><rect x="46" y="2" width="1" height="1"/><rect x="48" y="0" width="1" height="1"/><rect x="48" y="4" width="1" height="1"/></g></svg>
<svg class="a" style="left:0px;top:449px;" width="320" height="24" viewBox="0 0 320 24"><path d="M249.5,10 L258.5,10 L254,14.5 Z" fill="#1E1E1E"/><g fill="#1E1E1E" shape-rendering="crispEdges"><rect x="268" y="7" width="5" height="1"/><rect x="268" y="7" width="1" height="6"/><rect x="271" y="7" width="2" height="6"/><rect x="266" y="13" width="8" height="1"/><rect x="270" y="14" width="1" height="4"/></g><rect x="281.5" y="8" width="9" height="8" fill="none" stroke="#1E1E1E" stroke-width="1" shape-rendering="crispEdges"/><rect x="281" y="7" width="10" height="2" fill="#1E1E1E" shape-rendering="crispEdges"/><path d="M298.5,7.5 L306,15.5 M306,7.5 L298.5,15.5" stroke="#1E1E1E" stroke-width="1.5" fill="none"/></svg>
<div class="a" style="left:16px;top:471px;width:299px;height:199px;background:#fff;"></div>
<div class="a" style="left:111px;top:490px;width:203px;height:17px;background:#E9E7E3;"></div>
<div class="a" style="left:111px;top:526px;width:203px;height:17px;background:#E9E7E3;"></div>
<div class="a" style="left:16px;top:471px;width:299px;height:1px;background:#A0A0A0;"></div>
<div class="a" style="left:16px;top:489px;width:299px;height:1px;background:#A0A0A0;"></div>
<div class="a" style="left:16px;top:507px;width:299px;height:1px;background:#A0A0A0;"></div>
<div class="a" style="left:16px;top:525px;width:299px;height:1px;background:#A0A0A0;"></div>
<div class="a" style="left:16px;top:543px;width:299px;height:1px;background:#A0A0A0;"></div>
<div class="a" style="left:16px;top:561px;width:299px;height:1px;background:#A0A0A0;"></div>
<div class="a" style="left:16px;top:579px;width:299px;height:1px;background:#A0A0A0;"></div>
<div class="a" style="left:16px;top:597px;width:299px;height:1px;background:#A0A0A0;"></div>
<div class="a" style="left:16px;top:615px;width:299px;height:1px;background:#A0A0A0;"></div>
<div class="a" style="left:16px;top:633px;width:299px;height:1px;background:#A0A0A0;"></div>
<div class="a" style="left:16px;top:651px;width:299px;height:1px;background:#A0A0A0;"></div>
<div class="a" style="left:16px;top:669px;width:299px;height:1px;background:#A0A0A0;"></div>
<div class="a" style="left:16px;top:471px;width:1px;height:199px;background:#A0A0A0;"></div>
<div class="a" style="left:314px;top:471px;width:1px;height:199px;background:#A0A0A0;"></div>
<div class="a" style="left:110px;top:489px;width:1px;height:55px;background:#A0A0A0;"></div>
<div class="a" style="left:110px;top:507px;width:205px;height:19px;box-sizing:border-box;border:1px solid #F84444;"></div>
<svg class="a" style="left:5px;top:476px;shape-rendering:crispEdges;" width="9" height="9" viewBox="0 0 9 9"><rect x="0.5" y="0.5" width="8" height="8" fill="#fff" stroke="#8C8C8C"/><rect x="2" y="4" width="5" height="1" fill="#000"/></svg>
<svg class="a" style="left:5px;top:548px;shape-rendering:crispEdges;" width="9" height="9" viewBox="0 0 9 9"><rect x="0.5" y="0.5" width="8" height="8" fill="#fff" stroke="#8C8C8C"/><rect x="2" y="4" width="5" height="1" fill="#000"/><rect x="4" y="2" width="1" height="5" fill="#000"/></svg>
<svg class="a" style="left:5px;top:566px;shape-rendering:crispEdges;" width="9" height="9" viewBox="0 0 9 9"><rect x="0.5" y="0.5" width="8" height="8" fill="#fff" stroke="#8C8C8C"/><rect x="2" y="4" width="5" height="1" fill="#000"/><rect x="4" y="2" width="1" height="5" fill="#000"/></svg>
<svg class="a" style="left:5px;top:584px;shape-rendering:crispEdges;" width="9" height="9" viewBox="0 0 9 9"><rect x="0.5" y="0.5" width="8" height="8" fill="#fff" stroke="#8C8C8C"/><rect x="2" y="4" width="5" height="1" fill="#000"/><rect x="4" y="2" width="1" height="5" fill="#000"/></svg>
<svg class="a" style="left:5px;top:602px;shape-rendering:crispEdges;" width="9" height="9" viewBox="0 0 9 9"><rect x="0.5" y="0.5" width="8" height="8" fill="#fff" stroke="#8C8C8C"/><rect x="2" y="4" width="5" height="1" fill="#000"/><rect x="4" y="2" width="1" height="5" fill="#000"/></svg>
<svg class="a" style="left:5px;top:620px;shape-rendering:crispEdges;" width="9" height="9" viewBox="0 0 9 9"><rect x="0.5" y="0.5" width="8" height="8" fill="#fff" stroke="#8C8C8C"/><rect x="2" y="4" width="5" height="1" fill="#000"/><rect x="4" y="2" width="1" height="5" fill="#000"/></svg>
<svg class="a" style="left:5px;top:638px;shape-rendering:crispEdges;" width="9" height="9" viewBox="0 0 9 9"><rect x="0.5" y="0.5" width="8" height="8" fill="#fff" stroke="#8C8C8C"/><rect x="2" y="4" width="5" height="1" fill="#000"/><rect x="4" y="2" width="1" height="5" fill="#000"/></svg>
<svg class="a" style="left:5px;top:656px;shape-rendering:crispEdges;" width="9" height="9" viewBox="0 0 9 9"><rect x="0.5" y="0.5" width="8" height="8" fill="#fff" stroke="#8C8C8C"/><rect x="2" y="4" width="5" height="1" fill="#000"/><rect x="4" y="2" width="1" height="5" fill="#000"/></svg>
<div class="a" style="left:319px;top:2px;width:487px;height:25px;background:#EEEEF2;"></div>
<svg class="a" style="left:329px;top:7px;" width="5" height="18" viewBox="0 0 5 18"><g fill="#8E8E96" shape-rendering="crispEdges"><rect x="0" y="0" width="1" height="1"/><rect x="4" y="0" width="1" height="1"/><rect x="2" y="2" width="1" height="1"/><rect x="0" y="4" width="1" height="1"/><rect x="4" y="4" width="1" height="1"/><rect x="2" y="6" width="1" height="1"/><rect x="0" y="8" width="1" height="1"/><rect x="4" y="8" width="1" height="1"/><rect x="2" y="10" width="1" height="1"/><rect x="0" y="12" width="1" height="1"/><rect x="4" y="12" width="1" height="1"/><rect x="2" y="14" width="1" height="1"/><rect x="0" y="16" width="1" height="1"/><rect x="4" y="16" width="1" height="1"/></g></svg>
<svg class="a" style="left:0px;top:0px;" width="809" height="30" viewBox="0 0 809 30"><rect x="387" y="6" width="1" height="19" fill="#C4C6D4" shape-rendering="crispEdges"/><rect x="459" y="6" width="1" height="19" fill="#C4C6D4" shape-rendering="crispEdges"/><rect x="487" y="6" width="1" height="19" fill="#C4C6D4" shape-rendering="crispEdges"/><rect x="636" y="6" width="1" height="19" fill="#C4C6D4" shape-rendering="crispEdges"/><rect x="391.5" y="4.5" width="21" height="21" fill="#F0F0F5" stroke="#3399FF" shape-rendering="crispEdges"/><rect x="491.5" y="4.5" width="32" height="21" fill="#F0F0F5" stroke="#3399FF" shape-rendering="crispEdges"/><circle cx="351.1" cy="13.7" r="5.1" fill="none" stroke="#333" stroke-width="1.7"/><path d="M355,17.8 L358,21" stroke="#333" stroke-width="1.8" stroke-linecap="round"/><path d="M347.8,13.7 L351,10.9 V12.5 H354.2 V14.9 H351 V16.5 Z" fill="#D9A40E"/><circle cx="373.1" cy="13.7" r="5.1" fill="none" stroke="#8C8C8C" stroke-width="1.7"/><path d="M377,17.8 L380,21" stroke="#8C8C8C" stroke-width="1.8" stroke-linecap="round"/><path d="M376.4,13.7 L373.2,10.9 V12.5 H370 V14.9 H373.2 V16.5 Z" fill="#C4C4C4"/><polygon points="401.90,7.90 407.36,11.05 401.90,13.70 396.44,11.05" fill="#DADADA"/><polygon points="396.44,11.05 401.90,13.70 401.90,20.50 396.44,17.35" fill="#6C6C6C"/><polygon points="401.90,13.70 407.36,11.05 407.36,17.35 401.90,20.50" fill="#A9A9A9"/><g fill="none" stroke="#333" stroke-width="1.3" stroke-linejoin="round"><polygon points="401.90,7.90 407.36,11.05 407.36,17.35 401.90,20.50 396.44,17.35 396.44,11.05"/><polyline points="396.44,11.05 401.90,13.70 407.36,11.05"/><polyline points="401.90,13.70 401.90,20.50"/></g><polygon points="424,9.1 430,12.2 424,15.2 418,12.2" fill="#CBCBCB"/><polygon points="418,12.2 424,15.2 424,20.6 418,17.8" fill="#727272"/><polygon points="424,15.2 430,12.2 430,17.8 424,20.6" fill="#A2A2A2"/><g stroke="#262626" stroke-width="1.0" stroke-linejoin="round"><path d="M445.3,9.2 L448.3,8.2 L453,10.6 V14.6 L449.6,14.8 L445.3,12 Z" fill="#fff"/><path d="M445.3,9.2 L449.8,11.4 L453,10.6 M449.8,11.4 V14.8" fill="none"/><rect x="450.6" y="12" width="1.6" height="1.8" fill="#fff" stroke-width="0.9"/><path d="M439,15 L442,13.9 L446.8,16.3 V20.3 L443.4,20.6 L439,17.8 Z" fill="#E8B010"/><path d="M439,15 L443.5,17.2 L446.8,16.3 M443.5,17.2 V20.6" fill="none"/></g><path d="M440.2,12.4 Q440.6,10.2 442.6,9.6" fill="none" stroke="#333" stroke-width="1"/><path d="M441.6,8.8 L443.6,9.4 L442.2,10.8 Z" fill="#333"/><path d="M452.2,16.6 Q451.8,18.8 449.8,19.4" fill="none" stroke="#333" stroke-width="1"/><path d="M450.8,20.2 L448.8,19.6 L450.2,18.2 Z" fill="#333"/><g fill="none" stroke="#7C7C7C" stroke-width="1.1" shape-rendering="crispEdges"><rect x="467.5" y="8.5" width="5" height="5"/><rect x="474.5" y="15.5" width="6" height="6"/><path d="M477.5,15.5 V21.5 M474.5,18.5 H480.5"/></g><path d="M474.6,9.2 L478,12.6" stroke="#C2C2C2" stroke-width="1.2"/><path d="M479,13.8 L478.8,10.8 L476,13.4 Z" fill="#C2C2C2"/><g fill="none" stroke="#333" stroke-width="1.2"><path d="M496.6,12.4 A6,6 0 0 1 507.6,12.4"/><path d="M507.6,17.2 A6,6 0 0 1 496.6,17.2"/></g><path d="M495,12 L498.6,12.8 L496.6,15.4 Z" fill="#D9A40E"/><path d="M509.2,17.6 L505.6,16.8 L507.6,14.2 Z" fill="#D9A40E"/><path d="M515.8,13.1 H521.8 L518.8,16.2 Z" fill="#6E6E6E"/><g fill="#D9A40E"><path d="M534.9,7.9 l3.2,3 h-6.4 Z"/><path d="M534.9,22.1 l3.2,-3 h-6.4 Z"/><path d="M528,15 l3,-3.2 v6.4 Z"/><path d="M541.9,15 l-3,-3.2 v6.4 Z"/></g><g fill="#111"><rect x="534.1" y="11.4" width="1.6" height="1.6"/><rect x="534.1" y="17" width="1.6" height="1.6"/><rect x="531.3" y="14.2" width="1.6" height="1.6"/><rect x="536.9" y="14.2" width="1.6" height="1.6"/></g><circle cx="556.6" cy="13.7" r="5.1" fill="none" stroke="#333" stroke-width="1.7"/><path d="M560.5,17.8 L563.5,21" stroke="#333" stroke-width="1.8" stroke-linecap="round"/><path d="M556.6,10.2 L559.2,13 H554 Z M556.6,17.2 L559.2,14.4 H554 Z" fill="#D9A40E"/><circle cx="578.3" cy="13.7" r="5.1" fill="none" stroke="#333" stroke-width="1.7"/><path d="M582.2,17.8 L585.2,21" stroke="#333" stroke-width="1.8" stroke-linecap="round"/><path d="M577.1,10.6 H579.5 V12.5 H581.4 V14.9 H579.5 V16.8 H577.1 V14.9 H575.2 V12.5 H577.1 Z" fill="#D9A40E"/><circle cx="600.2" cy="13.7" r="5.1" fill="none" stroke="#333" stroke-width="1.7"/><path d="M604.1,17.8 L607.1,21" stroke="#333" stroke-width="1.8" stroke-linecap="round"/><polygon points="600.20,10.80 602.88,12.35 600.20,13.90 597.52,12.35" fill="#fff"/><polygon points="597.52,12.35 600.20,13.90 600.20,17.00 597.52,15.45" fill="#4A90E8"/><polygon points="600.20,13.90 602.88,12.35 602.88,15.45 600.20,17.00" fill="#7AB0F0"/><g fill="none" stroke="#7A7A7A" stroke-width="0.6" stroke-linejoin="round"><polygon points="600.20,10.80 602.88,12.35 602.88,15.45 600.20,17.00 597.52,15.45 597.52,12.35"/><polyline points="597.52,12.35 600.20,13.90 602.88,12.35"/><polyline points="600.20,13.90 600.20,17.00"/></g><circle cx="622.2" cy="13.7" r="5.1" fill="none" stroke="#333" stroke-width="1.7"/><path d="M626.1,17.8 L629.1,21" stroke="#333" stroke-width="1.8" stroke-linecap="round"/><polygon points="622.20,10.80 624.88,12.35 622.20,13.90 619.52,12.35" fill="#fff"/><polygon points="619.52,12.35 622.20,13.90 622.20,17.00 619.52,15.45" fill="#10D020"/><polygon points="622.20,13.90 624.88,12.35 624.88,15.45 622.20,17.00" fill="#4A90E8"/><g fill="none" stroke="#7A7A7A" stroke-width="0.6" stroke-linejoin="round"><polygon points="622.20,10.80 624.88,12.35 624.88,15.45 622.20,17.00 619.52,15.45 619.52,12.35"/><polyline points="619.52,12.35 622.20,13.90 624.88,12.35"/><polyline points="622.20,13.90 622.20,17.00"/></g><rect x="683" y="8" width="6" height="6" fill="#FF0000" shape-rendering="crispEdges"/><path d="M688.2,11.4 L695.2,13.6 L692.8,15.2 L695.9,19.6 L694.3,20.7 L691.3,16.4 L689.4,18.4 Z" fill="#3C3C3C"/><path d="M732.8,13.1 H738.4 L735.6,15.9 Z" fill="#808080"/><g fill="none" stroke="#858585" stroke-width="1" shape-rendering="crispEdges"><path d="M750.5,13.5 V8.5 H757"/><path d="M754.5,14 V10.5 M753,10.5 H756"/><path d="M759.5,13.5 V8.5 H765.5"/><path d="M761,10.5 H765.5 M762.5,10.5 V14"/><path d="M750.5,22.5 V16.5 H757"/><path d="M752,18.5 H756 M753.5,18.5 V22.5"/></g><path d="M760.4,16.8 L763.4,19.4 L762,19.7 L763,21.8 L762.2,22.1 L761.3,20.1 L760.4,21 Z" fill="#858585"/><g fill="none" stroke="#858585" stroke-width="1" stroke-linejoin="round"><rect x="777.5" y="11.5" width="9" height="10"/><path d="M777.5,11.5 L773.5,8.5 H782.5 L786.5,11.5 M773.5,8.5 V18.5 L777.5,21.5"/><circle cx="776.6" cy="10" r="1.1"/></g><path d="M780.4,14.6 L783.4,17.2 L782,17.5 L783,19.6 L782.2,19.9 L781.3,17.9 L780.4,18.8 Z" fill="#858585"/><path d="M796.4,6.2 L799.9,9 L803.4,6.2 M796.4,9.8 L799.9,12.6 L803.4,9.8" fill="none" stroke="#2A2A2A" stroke-width="1"/><path d="M796.2,18.9 H804 L800.1,22.6 Z" fill="#000"/></svg>
<div class="a" style="left:319px;top:28px;width:487px;height:649px;background:linear-gradient(to bottom,#6B8BDD 0%,#F3F6FD 100%);"></div>
<div class="a" style="left:318px;top:27px;width:489px;height:1px;background:#F6F6F8;"></div>
<div class="a" style="left:318px;top:27px;width:1px;height:651px;background:#F6F6F8;"></div>
<div class="a" style="left:806px;top:2px;width:1px;height:676px;background:#fff;"></div>
<div class="a" style="left:319px;top:677px;width:488px;height:1px;background:#fff;"></div>
<svg class="a" style="left:0px;top:0px;shape-rendering:auto;" width="809" height="680" viewBox="0 0 809 680"><defs><linearGradient id="rfg" gradientUnits="userSpaceOnUse" x1="0" y1="240" x2="0" y2="560"><stop offset="0" stop-color="rgb(147,150,178)"/><stop offset="1" stop-color="rgb(163,166,187)"/></linearGradient><clipPath id="vp"><rect x="319" y="28" width="487" height="649"/></clipPath></defs><g clip-path="url(#vp)"><polygon points="455.0,207.0 658.4,90.0 830.0,189.3 830.0,224.6 657.7,324.2" fill="rgba(162,165,193,0.38)"/><polygon points="455.0,207.0 657.7,324.2 639.6,560.5 438.5,444.7 449.3,280.0" fill="rgba(99,102,130,0.38)"/><polygon points="657.7,324.2 830.0,224.6 830.0,463.7 639.6,560.5" fill="url(#rfg)" fill-opacity="0.38"/><circle cx="750" cy="384.3" r="4.6" fill="#B00000"/><circle cx="749.3" cy="383.5" r="2.6" fill="#D81010"/><line x1="470.5" y1="234.3" x2="473.9" y2="241.0" stroke="#FF0000" stroke-width="5.4" stroke-linecap="butt"/><line x1="473.6" y1="240.4" x2="476.4" y2="245.7" stroke="#FFB200" stroke-width="5.4" stroke-linecap="butt"/><line x1="476.1" y1="245.1" x2="479.6" y2="251.9" stroke="#FFFF00" stroke-width="5.4" stroke-linecap="butt"/><line x1="479.3" y1="251.3" x2="483.3" y2="259.1" stroke="#B2FF00" stroke-width="5.4" stroke-linecap="butt"/><line x1="483.0" y1="258.5" x2="489.3" y2="270.6" stroke="#00FF00" stroke-width="5.4" stroke-linecap="butt"/><line x1="488.9" y1="270.0" x2="504.7" y2="300.4" stroke="#00FFB2" stroke-width="5.4" stroke-linecap="butt"/><line x1="504.4" y1="299.8" x2="520.7" y2="331.3" stroke="#00FFFF" stroke-width="5.4" stroke-linecap="butt"/><line x1="520.4" y1="330.7" x2="543.8" y2="376.0" stroke="#00B2FF" stroke-width="5.4" stroke-linecap="butt"/><line x1="543.5" y1="375.4" x2="623.1" y2="529.3" stroke="#0000FF" stroke-width="5.4" stroke-linecap="butt"/><path d="M480.8,270.6 L486.8,276.4 L485.6,269.6 Z" fill="#7658A6"/><path d="M490.2,265.6 L493,274 L488.8,270.6 Z" fill="#9A66C6"/><rect x="471.4" y="238.3" width="3.3" height="1.8" fill="#30104A"/><rect x="474.6" y="244.5" width="3.3" height="1.8" fill="#30104A"/><rect x="477.8" y="250.7" width="3.3" height="1.8" fill="#30104A"/><rect x="481.0" y="256.9" width="3.3" height="1.8" fill="#30104A"/><rect x="484.2" y="263.1" width="3.3" height="1.8" fill="#30104A"/><rect x="487.4" y="269.4" width="3.3" height="1.8" fill="#30104A"/><rect x="490.6" y="275.6" width="3.3" height="1.8" fill="#000"/><rect x="493.9" y="281.8" width="3.3" height="1.8" fill="#000"/><rect x="497.1" y="288.0" width="3.3" height="1.8" fill="#000"/><rect x="500.3" y="294.2" width="3.3" height="1.8" fill="#000"/><rect x="503.5" y="300.4" width="3.3" height="1.8" fill="#000"/><rect x="506.7" y="306.6" width="3.3" height="1.8" fill="#000"/><rect x="509.9" y="312.8" width="3.3" height="1.8" fill="#000"/><rect x="513.1" y="319.0" width="3.3" height="1.8" fill="#000"/><rect x="516.3" y="325.2" width="3.3" height="1.8" fill="#000"/><rect x="519.6" y="331.4" width="3.3" height="1.8" fill="#000"/><rect x="522.8" y="337.6" width="3.3" height="1.8" fill="#000"/><rect x="526.0" y="343.9" width="3.3" height="1.8" fill="#000"/><rect x="529.2" y="350.1" width="3.3" height="1.8" fill="#000"/><rect x="532.4" y="356.3" width="3.3" height="1.8" fill="#000"/><rect x="535.6" y="362.5" width="3.3" height="1.8" fill="#000"/><rect x="538.8" y="368.7" width="3.3" height="1.8" fill="#000"/><rect x="542.0" y="374.9" width="3.3" height="1.8" fill="#000"/><rect x="545.2" y="381.1" width="3.3" height="1.8" fill="#000"/><rect x="548.5" y="387.3" width="3.3" height="1.8" fill="#000"/><rect x="551.7" y="393.5" width="3.3" height="1.8" fill="#000"/><rect x="554.9" y="399.7" width="3.3" height="1.8" fill="#000"/><rect x="558.1" y="405.9" width="3.3" height="1.8" fill="#000"/><rect x="561.3" y="412.1" width="3.3" height="1.8" fill="#000"/><rect x="564.5" y="418.4" width="3.3" height="1.8" fill="#000"/><rect x="567.7" y="424.6" width="3.3" height="1.8" fill="#000"/><rect x="571.0" y="430.8" width="3.3" height="1.8" fill="#000"/><rect x="574.2" y="437.0" width="3.3" height="1.8" fill="#000"/><rect x="577.4" y="443.2" width="3.3" height="1.8" fill="#000"/><rect x="580.6" y="449.4" width="3.3" height="1.8" fill="#000"/><rect x="583.8" y="455.6" width="3.3" height="1.8" fill="#000"/><rect x="587.0" y="461.8" width="3.3" height="1.8" fill="#000"/><rect x="590.2" y="468.0" width="3.3" height="1.8" fill="#000"/><rect x="593.4" y="474.2" width="3.3" height="1.8" fill="#000"/><rect x="596.6" y="480.4" width="3.3" height="1.8" fill="#000"/><rect x="599.9" y="486.6" width="3.3" height="1.8" fill="#000"/><rect x="603.1" y="492.9" width="3.3" height="1.8" fill="#000"/><rect x="606.3" y="499.1" width="3.3" height="1.8" fill="#000"/><rect x="609.5" y="505.3" width="3.3" height="1.8" fill="#000"/><rect x="612.7" y="511.5" width="3.3" height="1.8" fill="#000"/><rect x="615.9" y="517.7" width="3.3" height="1.8" fill="#000"/><rect x="619.1" y="523.9" width="3.3" height="1.8" fill="#000"/><rect x="469" y="231" width="4" height="4" fill="#000"/><path d="M447.5,224.5 h16.5 l6.5,9 l-6.5,9 h-16.5 Z" fill="#fff" stroke="#000" stroke-width="1"/><rect x="623" y="528" width="5.2" height="6.4" fill="#000"/><path d="M603.5,521.5 h16.5 l6.5,9 l-6.5,9 h-16.5 Z" fill="#fff" stroke="#000" stroke-width="1"/></g><rect x="334" y="138" width="16" height="153" fill="#000" shape-rendering="crispEdges"/><rect x="335" y="141" width="14" height="15" fill="#FF0000" shape-rendering="crispEdges"/><rect x="335" y="157" width="14" height="16" fill="#FFB200" shape-rendering="crispEdges"/><rect x="335" y="174" width="14" height="16" fill="#FFFF00" shape-rendering="crispEdges"/><rect x="335" y="191" width="14" height="15" fill="#B2FF00" shape-rendering="crispEdges"/><rect x="335" y="207" width="14" height="16" fill="#00FF00" shape-rendering="crispEdges"/><rect x="335" y="224" width="14" height="16" fill="#00FFB2" shape-rendering="crispEdges"/><rect x="335" y="241" width="14" height="15" fill="#00FFFF" shape-rendering="crispEdges"/><rect x="335" y="257" width="14" height="16" fill="#00B2FF" shape-rendering="crispEdges"/><rect x="335" y="274" width="14" height="14" fill="#0000FF" shape-rendering="crispEdges"/></svg>
<span class="t" style="left:8.3px;top:7px;font-size:11.5px;color:#fff;transform:scaleX(1.0676);">Outline</span>
<span class="t" style="left:27.6px;top:31px;font-size:11.5px;color:#1E1E1E;transform:scaleX(1.0623);">Name</span>
<span class="t" style="left:129px;top:31px;font-size:11.5px;color:#9C9CA4;transform:scaleX(1.0121);">Search Outline</span>
<span class="t" style="left:31.5px;top:52px;font-size:11px;color:#000;font-weight:bold;transform:scaleX(1.1520);">Project*</span>
<span class="t" style="left:58.6px;top:68px;font-size:11px;color:#000;font-weight:bold;transform:scaleX(1.1079);">Model (A4)</span>
<span class="t" style="left:84.8px;top:84px;font-size:11px;color:#000;transform:scaleX(0.9794);">Geometry</span>
<span class="t" style="left:84.8px;top:100px;font-size:11px;color:#000;transform:scaleX(0.9748);">Materials</span>
<span class="t" style="left:84.8px;top:116px;font-size:11px;color:#000;transform:scaleX(0.9831);">Construction Geometry</span>
<span class="t" style="left:111.9px;top:132px;font-size:11px;color:#fff;transform:scaleX(1.0070);">Path</span>
<span class="t" style="left:111.9px;top:148px;font-size:11px;color:#000;transform:scaleX(0.9915);">Surface</span>
<span class="t" style="left:84.8px;top:164px;font-size:11px;color:#000;transform:scaleX(0.9773);">Coordinate Systems</span>
<span class="t" style="left:84.8px;top:180px;font-size:11px;color:#000;transform:scaleX(0.9477);">Mesh</span>
<span class="t" style="left:84.8px;top:196px;font-size:11px;color:#000;font-weight:bold;transform:scaleX(1.1113);">Static Structural (A5)</span>
<span class="t" style="left:111.9px;top:212px;font-size:11px;color:#000;transform:scaleX(0.9730);">Analysis Settings</span>
<span class="t" style="left:111.9px;top:228px;font-size:11px;color:#000;transform:scaleX(0.9915);">Fixed Support</span>
<span class="t" style="left:111.9px;top:244px;font-size:11px;color:#000;transform:scaleX(0.9675);">Pressure</span>
<span class="t" style="left:111.9px;top:260px;font-size:11px;color:#000;transform:scaleX(0.9742);">Force</span>
<span class="t" style="left:111.9px;top:276px;font-size:11px;color:#000;font-weight:bold;transform:scaleX(1.0842);">Solution (A6)</span>
<span class="t" style="left:138.9px;top:292px;font-size:11px;color:#000;">Solution Information</span>
<span class="t" style="left:138.9px;top:308px;font-size:11px;color:#000;">Total Deformation</span>
<span class="t" style="left:138.9px;top:324px;font-size:11px;color:#000;transform:scaleX(0.9805);">Directional Deformation</span>
<span class="t" style="left:138.9px;top:340px;font-size:11px;color:#fff;transform:scaleX(0.9652);">Equivalent Elastic Strain</span>
<span class="t" style="left:138.9px;top:356px;font-size:11px;color:#000;transform:scaleX(0.9782);">Strain Energy</span>
<span class="t" style="left:138.9px;top:372px;font-size:11px;color:#000;transform:scaleX(0.9783);">User Defined Result</span>
<span class="t" style="left:138.9px;top:388px;font-size:11px;color:#000;transform:scaleX(0.8766);">ENERGYPOTENTIAL</span>
<span class="t" style="left:138.9px;top:404px;font-size:11px;color:#000;transform:scaleX(0.8518);">EPTTY</span>
<span class="t" style="left:138.9px;top:420px;font-size:11px;color:#000;transform:scaleX(0.8765);">UVECTORS</span>
<span class="t" style="left:8px;top:456px;font-size:11.5px;color:#3C3C3C;transform:scaleX(1.0125);">Details of "Equivalent Elastic Strain"</span>
<span class="t" style="left:19.6px;top:475px;font-size:11.5px;color:#000;font-weight:bold;transform:scaleX(0.9097);">Scope</span>
<span class="t" style="left:19.6px;top:547px;font-size:11.5px;color:#000;font-weight:bold;transform:scaleX(0.9881);">Definition</span>
<span class="t" style="left:19.6px;top:565px;font-size:11.5px;color:#000;font-weight:bold;transform:scaleX(0.9515);">Integration Point Results</span>
<span class="t" style="left:19.6px;top:583px;font-size:11.5px;color:#000;font-weight:bold;transform:scaleX(0.9050);">Results</span>
<span class="t" style="left:19.6px;top:601px;font-size:11.5px;color:#000;font-weight:bold;transform:scaleX(0.9438);">Graph Controls</span>
<span class="t" style="left:19.6px;top:619px;font-size:11.5px;color:#000;font-weight:bold;transform:scaleX(0.9633);">Minimum Value Over Time</span>
<span class="t" style="left:19.6px;top:637px;font-size:11.5px;color:#000;font-weight:bold;transform:scaleX(0.9579);">Maximum Value Over Time</span>
<span class="t" style="left:19.6px;top:655px;font-size:11.5px;color:#000;font-weight:bold;transform:scaleX(0.9850);">Information</span>
<span class="t" style="left:19.6px;top:493px;font-size:11.5px;color:#000;transform:scaleX(1.0322);">Scoping Method</span>
<span class="t" style="left:19.6px;top:511px;font-size:11.5px;color:#000;transform:scaleX(0.9801);">Path</span>
<span class="t" style="left:19.6px;top:529px;font-size:11.5px;color:#000;transform:scaleX(0.9782);">Geometry</span>
<span class="t" style="left:113.5px;top:493px;font-size:11.5px;color:#000;transform:scaleX(0.9801);">Path</span>
<span class="t" style="left:113.5px;top:511px;font-size:11.5px;color:#000;transform:scaleX(0.9801);">Path</span>
<span class="t" style="left:113.5px;top:529px;font-size:11.5px;color:#000;">All Bodies</span>
<span class="t" style="left:644px;top:10px;font-size:11.5px;color:#1E1E1E;transform:scaleX(0.9822);">Select</span>
<span class="t" style="left:700px;top:10px;font-size:11.5px;color:#1E1E1E;transform:scaleX(1.0875);">Mode</span>
<span class="t" style="left:333.8px;top:44px;font-size:12px;color:#000;font-weight:bold;transform:scaleX(0.9606);">A: Static Structural</span>
<span class="t" style="left:333.8px;top:59px;font-size:12px;color:#000;transform:scaleX(0.9567);">Equivalent Elastic Strain</span>
<span class="t" style="left:333.8px;top:74px;font-size:12px;color:#000;transform:scaleX(0.9599);">Type: Equivalent Elastic Strain</span>
<span class="t" style="left:333.8px;top:89px;font-size:12px;color:#000;transform:scaleX(1.0673);">Unit: m/m</span>
<span class="t" style="left:333.8px;top:104px;font-size:12px;color:#000;transform:scaleX(0.9807);">Time: 5</span>
<span class="t" style="left:358.1px;top:133px;font-size:12px;color:#000;font-weight:bold;transform:scaleX(1.0305);">1.2767e-5 Max</span>
<span class="t" style="left:358.5px;top:149px;font-size:12px;color:#000;transform:scaleX(0.9048);">1.1674e-5</span>
<span class="t" style="left:358.5px;top:166px;font-size:12px;color:#000;transform:scaleX(0.9048);">1.0581e-5</span>
<span class="t" style="left:358.5px;top:183px;font-size:12px;color:#000;transform:scaleX(0.9048);">9.4885e-6</span>
<span class="t" style="left:358.5px;top:199px;font-size:12px;color:#000;transform:scaleX(0.9048);">8.3955e-6</span>
<span class="t" style="left:358.5px;top:216px;font-size:12px;color:#000;transform:scaleX(0.9048);">7.3025e-6</span>
<span class="t" style="left:358.5px;top:233px;font-size:12px;color:#000;transform:scaleX(0.9048);">6.2096e-6</span>
<span class="t" style="left:358.5px;top:249px;font-size:12px;color:#000;transform:scaleX(0.9199);">5.1166e-6</span>
<span class="t" style="left:358.5px;top:266px;font-size:12px;color:#000;transform:scaleX(0.9048);">4.0236e-6</span>
<span class="t" style="left:358.1px;top:283px;font-size:12px;color:#000;font-weight:bold;transform:scaleX(1.0250);">2.9306e-6 Min</span>
<span class="t" style="left:450.2px;top:228px;font-size:12px;color:#000;transform:scaleX(0.8374);">1</span>
<span class="t" style="left:606.2px;top:526px;font-size:12px;color:#000;transform:scaleX(0.8075);">2</span>
</body></html>
